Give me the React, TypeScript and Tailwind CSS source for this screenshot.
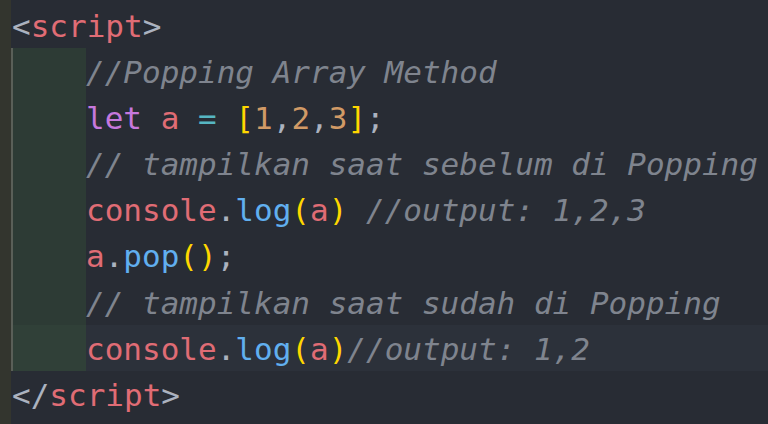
const C = {
  red: 'text-[#e06c75]',
  purple: 'text-[#c678dd]',
  cyan: 'text-[#56b6c2]',
  orange: 'text-[#d19a66]',
  blue: 'text-[#61afef]',
  gold: 'text-[#ffd700]',
  punct: 'text-[#abb2bf]',
  comment: 'text-[#7f848e] italic',
}

type Tok = [string, string]

const lines: { indent: boolean; active?: boolean; toks: Tok[] }[] = [
  { indent: false, toks: [['<', C.punct], ['script', C.red], ['>', C.punct]] },
  { indent: true, toks: [['//Popping Array Method', C.comment]] },
  {
    indent: true,
    toks: [
      ['let', C.purple], [' ', C.punct], ['a', C.red], [' ', C.punct], ['=', C.cyan], [' ', C.punct],
      ['[', C.gold], ['1', C.orange], [',', C.punct], ['2', C.orange], [',', C.punct], ['3', C.orange],
      [']', C.gold], [';', C.punct],
    ],
  },
  { indent: true, toks: [['// tampilkan saat sebelum di Popping', C.comment]] },
  {
    indent: true,
    toks: [
      ['console', C.red], ['.', C.punct], ['log', C.blue], ['(', C.gold], ['a', C.red], [')', C.gold],
      [' ', C.punct], ['//output: 1,2,3', C.comment],
    ],
  },
  {
    indent: true,
    toks: [['a', C.red], ['.', C.punct], ['pop', C.blue], ['(', C.gold], [')', C.gold], [';', C.punct]],
  },
  { indent: true, toks: [['// tampilkan saat sudah di Popping', C.comment]] },
  {
    indent: true,
    active: true,
    toks: [
      ['console', C.red], ['.', C.punct], ['log', C.blue], ['(', C.gold], ['a', C.red], [')', C.gold],
      ['//output: 1,2', C.comment],
    ],
  },
  { indent: false, toks: [['</', C.punct], ['script', C.red], ['>', C.punct]] },
]

export default function App() {
  return (
    <div className="flex h-[424px] w-[768px] overflow-hidden bg-[#282c34]">
      <div className="w-[11px] shrink-0 bg-[#33352e]" />
      <div
        className="flex-1 whitespace-pre pt-[2px] text-[31px]"
        style={{ fontFamily: '"DejaVu Sans Mono", monospace' }}
      >
        {lines.map((ln, i) => (
          <div key={i} className={`flex h-[46.1px] ${ln.active ? 'bg-[#2c313a]' : ''}`}>
            {ln.indent && (
              <div className={`w-[75px] shrink-0 border-l-2 border-[#5a5f58] ${ln.active ? 'bg-[#304038]' : 'bg-[#2d3b35]'}`} />
            )}
            <div className={`pt-[3px] leading-[43px] ${ln.indent ? '' : 'pl-[1px]'}`}>
              {ln.toks.map((t, j) => (
                <span key={j} className={t[1]}>{t[0]}</span>
              ))}
            </div>
          </div>
        ))}
      </div>
    </div>
  )
}
